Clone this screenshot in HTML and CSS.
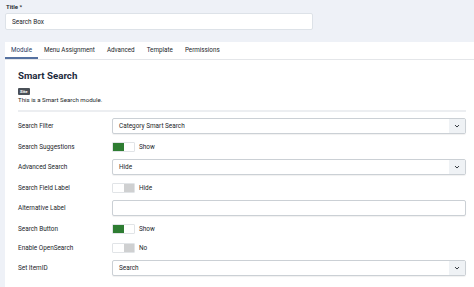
FILE: index.html
```html
<!DOCTYPE html>
<html lang="en">
<head>
    <meta charset="UTF-8">
    <meta name="viewport" content="width=device-width, initial-scale=1.0">
    <title>Module: Smart Search</title>
    <link rel="stylesheet" href="styles.css">
</head>
<body>
<div class="title-bar">
    <label class="title-label" for="title">Title *</label>
    <input class="title-input" id="title" type="text" value="Search Box">
</div>

<div class="card">
    <ul class="tabs">
        <li class="active">Module</li>
        <li>Menu Assignment</li>
        <li>Advanced</li>
        <li>Template</li>
        <li>Permissions</li>
    </ul>

    <div class="panel">
        <h2>Smart Search</h2>
        <span class="badge">Site</span>
        <p class="desc">This is a Smart Search module.</p>
        <hr>

        <div class="fields">
            <div class="row">
                <label>Search Filter</label>
                <div class="select"><span>Category Smart Search</span><span class="caret"><svg viewBox="0 0 10 10"><path d="M2.5 3.8 5 6.3 7.5 3.8"/></svg></span></div>
            </div>
            <div class="row">
                <label>Search Suggestions</label>
                <div class="toggle-wrap"><span class="switch on"><i></i><i></i></span>Show</div>
            </div>
            <div class="row">
                <label>Advanced Search</label>
                <div class="select"><span>Hide</span><span class="caret"><svg viewBox="0 0 10 10"><path d="M2.5 3.8 5 6.3 7.5 3.8"/></svg></span></div>
            </div>
            <div class="row">
                <label>Search Field Label</label>
                <div class="toggle-wrap"><span class="switch"><i></i><i></i></span>Hide</div>
            </div>
            <div class="row">
                <label>Alternative Label</label>
                <div class="text-field"></div>
            </div>
            <div class="row">
                <label>Search Button</label>
                <div class="toggle-wrap"><span class="switch on"><i></i><i></i></span>Show</div>
            </div>
            <div class="row">
                <label>Enable OpenSearch</label>
                <div class="toggle-wrap"><span class="switch"><i></i><i></i></span>No</div>
            </div>
            <div class="row">
                <label>Set ItemID</label>
                <div class="select"><span>Search</span><span class="caret"><svg viewBox="0 0 10 10"><path d="M2.5 3.8 5 6.3 7.5 3.8"/></svg></span></div>
            </div>
        </div>
    </div>
</div>
</body>
</html>
```

FILE: styles.css
```css
body {
    margin: 0;
    font-family: Roboto, 'Liberation Sans', Arial, sans-serif;
    color: #22262a;
    background-color: #eef1f7;
    overflow: hidden;
}

.title-bar {
    padding: 2px 5px 12px;
}

.title-label {
    display: block;
    font-size: 6px;
    line-height: 10px;
    font-weight: 600;
    padding-left: 1px;
}

.title-input {
    display: block;
    box-sizing: border-box;
    width: 308px;
    height: 17px;
    margin: 1px 0 0;
    padding: 0 6px;
    border: 1px solid #dde2e8;
    border-radius: 2px;
    background-color: #fff;
    font-family: inherit;
    font-size: 6.4px;
    color: #22262a;
    outline: none;
}

.card {
    margin-left: 5px;
    background-color: #fff;
    min-height: 245px;
}

.tabs {
    display: flex;
    list-style: none;
    margin: 0;
    padding: 0;
    height: 17px;
    border-bottom: 1px solid #e4e6e9;
}

.tabs li {
    padding: 0 6px;
    font-size: 6.3px;
    line-height: 17px;
    box-sizing: border-box;
}

.tabs li.active {
    color: #1f3b63;
    border-bottom: 2px solid #5571a0;
}

.panel {
    padding: 0 8px 0 13px;
}

.panel h2 {
    margin: 10px 0 0;
    font-size: 9.7px;
    line-height: 12px;
    font-weight: 700;
    color: #1c2a3d;
}

.badge {
    display: block;
    width: fit-content;
    margin-top: 6px;
    padding: 0 2px;
    height: 7px;
    line-height: 7px;
    border-radius: 1px;
    background-color: #4a5058;
    color: #fff;
    font-size: 4.3px;
    font-weight: 700;
}

.desc {
    margin: 0;
    font-size: 6.1px;
    line-height: 9px;
}

hr {
    margin: 6px 0 0;
    border: none;
    height: 2px;
    background-color: #eceef1;
}

.fields {
    display: flex;
    flex-direction: column;
    gap: 6px;
    margin-top: 6px;
}

.row {
    display: grid;
    grid-template-columns: 94px 1fr;
    align-items: center;
}

.row label {
    font-size: 6.4px;
}

.select,
.text-field {
    box-sizing: border-box;
    height: 16px;
    border: 1px solid #cbd0d5;
    border-radius: 2px;
    background-color: #fff;
    box-shadow: 0 1px 1px rgba(0, 0, 0, 0.06);
}

.select {
    display: flex;
    align-items: center;
    justify-content: space-between;
    font-size: 6.4px;
    padding-left: 6px;
}

.caret {
    width: 16px;
    height: 100%;
    display: flex;
    align-items: center;
    justify-content: center;
    background-color: #eff2f5;
}

.caret svg {
    width: 8px;
    height: 8px;
    fill: none;
    stroke: #2a2f35;
    stroke-width: 1.2;
}

.toggle-wrap {
    display: flex;
    align-items: center;
    height: 13px;
    font-size: 6.4px;
}

.switch {
    display: flex;
    box-sizing: border-box;
    width: 23px;
    height: 10px;
    margin-right: 4px;
    border: 1px solid #e1e4e7;
    border-radius: 1px;
    background-color: #fff;
}

.switch i {
    flex: 1;
}

.switch i:last-child {
    background-color: #cfd0d1;
}

.switch.on i:first-child {
    background-color: #2e7d32;
}

.switch.on i:last-child {
    background-color: #fff;
}
```
